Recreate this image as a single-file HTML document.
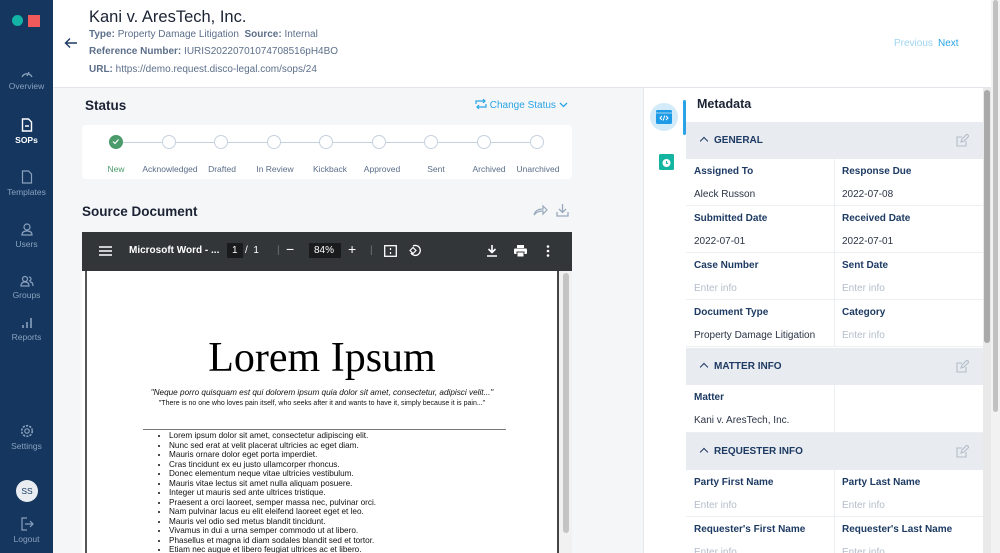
<!DOCTYPE html>
<html><head><meta charset="utf-8"><style>
*{box-sizing:border-box;margin:0;padding:0}
html,body{width:1000px;height:553px;overflow:hidden}
body{font-family:"Liberation Sans",Arial,sans-serif;background:#f5f6f8;position:relative;color:#1a2233}
.abs{position:absolute}
.side{left:0;top:0;width:53px;height:553px;background:#15375f}
.nav{position:absolute;left:0;width:53px;text-align:center;color:#8aa0bd;font-size:8.5px}
.nav svg{display:block;margin:0 auto 3px}
.hdr{left:53px;top:0;width:940px;height:88px;background:#fff;border-bottom:1px solid #e3e6ea}
.meta{color:#5c6f8a;font-size:10px}
.steps{left:82px;top:125px;width:490px;height:54px;background:#fff;border-radius:4px}
.step{position:absolute;top:10px;width:14px;height:14px;border-radius:50%;border:1.5px solid #c6d1de;background:#fff}
.line{position:absolute;top:17px;height:1px;background:#c6d1de}
.lbl{position:absolute;top:39px;font-size:8.5px;color:#5a6d88;transform:translateX(-50%);white-space:nowrap}
.pdf{left:82px;top:232px;width:490px;height:321px;background:#fff}
.tb{height:39px;background:#323639;color:#fff;font-size:10px;position:relative}
.tb span{position:absolute;top:13px}
.page{position:absolute;left:3px;top:39px;width:472px;height:282px;background:#fff;border-left:2px solid #555}
.panel{left:686px;top:88px;width:297px;height:465px;background:#fff}
.sec{position:absolute;left:0;width:297px;height:37px;background:#e8ebef;font-size:10px;font-weight:bold;color:#1d3a63}
.sec .t{position:absolute;left:28px;top:13px}
.sec .c{position:absolute;left:15px;top:16px;width:6px;height:6px;border-left:1.6px solid #1d3a63;border-top:1.6px solid #1d3a63;transform:rotate(45deg)}
.sec .e{position:absolute;right:14px;top:12px}
.row{position:absolute;left:0;width:297px;height:47px;border-bottom:1px solid #edf0f3}
.row .v{position:absolute;left:148px;top:0;width:1px;height:47px;background:#edf0f3}
.k{position:absolute;font-size:10px;font-weight:bold;color:#1d3a63;top:7px}
.val{position:absolute;font-size:10px;color:#2a3446;top:30px}
.ph{color:#b3bdc9}
</style></head><body>
<div class="abs side">
 <div class="abs" style="left:12px;top:15px;width:11px;height:11px;border-radius:50%;background:#13b3a5"></div>
 <div class="abs" style="left:28px;top:15px;width:12px;height:12px;background:#f05a5a"></div>
 <div class="nav" style="top:68px"><svg width="14" height="10" viewBox="0 0 14 10"><path d="M2 9A5.5 5.5 0 0 1 12 9M7 8L9 4" stroke="#8aa0bd" stroke-width="1.3" fill="none"/></svg>Overview</div>
 <div class="nav" style="top:118px;color:#fff;font-weight:bold"><svg width="12" height="14" viewBox="0 0 12 14"><path d="M1.5 1h6l3 3v9h-9z M4 8h4" stroke="#fff" stroke-width="1.4" fill="none"/></svg>SOPs</div>
 <div class="nav" style="top:170px"><svg width="12" height="14" viewBox="0 0 12 14"><path d="M1.5 1h6l3 3v9h-9z" stroke="#8aa0bd" stroke-width="1.2" fill="none"/></svg>Templates</div>
 <div class="nav" style="top:222px"><svg width="14" height="14" viewBox="0 0 14 14"><circle cx="7" cy="5" r="3" stroke="#8aa0bd" stroke-width="1.2" fill="none"/><path d="M2 13c0-3 2-4 5-4s5 1 5 4z" stroke="#8aa0bd" stroke-width="1.2" fill="none"/></svg>Users</div>
 <div class="nav" style="top:275px"><svg width="14" height="12" viewBox="0 0 14 12"><circle cx="5" cy="4" r="2.5" stroke="#8aa0bd" stroke-width="1.2" fill="none"/><path d="M1 11c0-3 2-4 4-4s4 1 4 4zM9 2a2 2 0 0 1 0 4M10 7c2 0 3 1 3 4" stroke="#8aa0bd" stroke-width="1.2" fill="none"/></svg>Groups</div>
 <div class="nav" style="top:317px"><svg width="12" height="12" viewBox="0 0 12 12"><path d="M2 11V8M6 11V5M10 11V1" stroke="#8aa0bd" stroke-width="1.6"/></svg>Reports</div>
 <div class="nav" style="top:424px"><svg width="14" height="14" viewBox="0 0 14 14"><circle cx="7" cy="7" r="2.2" stroke="#8aa0bd" stroke-width="1.2" fill="none"/><circle cx="7" cy="7" r="5.3" stroke="#8aa0bd" stroke-width="1.6" stroke-dasharray="2.2 1.2" fill="none"/></svg>Settings</div>
 <div class="abs" style="left:16px;top:480px;width:22px;height:22px;border-radius:50%;background:#e9edf2;color:#15375f;font-size:8.5px;text-align:center;line-height:22px">SS</div>
 <div class="nav" style="top:517px"><svg width="14" height="14" viewBox="0 0 14 14"><path d="M7 1H2v12h5M5 7h8M10 4l3 3-3 3" stroke="#8aa0bd" stroke-width="1.2" fill="none"/></svg>Logout</div>
</div>

<div class="abs hdr">
 <svg class="abs" style="left:11px;top:37px" width="14" height="12" viewBox="0 0 14 12"><path d="M13 6H2M6 1.5L1.5 6 6 10.5" stroke="#1d3a63" stroke-width="1.4" fill="none"/></svg>
 <div class="abs" style="left:36px;top:8px;font-size:16.5px;color:#1a2233">Kani v. AresTech, Inc.</div>
 <div class="abs meta" style="left:36px;top:29px"><b>Type:</b> Property Damage Litigation &nbsp;<b>Source:</b> Internal</div>
 <div class="abs meta" style="left:36px;top:46px"><b>Reference Number:</b> IURIS20220701074708516pH4BO</div>
 <div class="abs meta" style="left:36px;top:64px"><b>URL:</b> https://demo.request.disco-legal.com/sops/24</div>
 <div class="abs" style="left:841px;top:38px;font-size:10px;color:#9fd4f2">Previous</div>
 <div class="abs" style="left:885px;top:38px;font-size:10px;color:#2aa4e6">Next</div>
</div>

<div class="abs" style="left:85px;top:98px;font-size:13.5px;font-weight:bold">Status</div>
<div class="abs" style="left:475px;top:99px;font-size:10px;color:#2aa4e6"><svg width="12" height="10" viewBox="0 0 12 10" style="vertical-align:-1px"><path d="M1 5V2h9M8 0l2 2-2 2M11 5v3H2M4 10 2 8l2-2" stroke="#2aa4e6" stroke-width="1.2" fill="none"/></svg> Change Status <svg width="9" height="6" viewBox="0 0 9 6"><path d="M1 1l3.5 3.5L8 1" stroke="#2aa4e6" stroke-width="1.3" fill="none"/></svg></div>
<div class="abs steps">
 <div class="line" style="left:40px;width:415px"></div>
 <div class="step" style="left:27px;background:#4b9b6b;border-color:#4b9b6b"><svg width="11" height="11" viewBox="0 0 11 11" style="position:absolute;left:0;top:0"><path d="M3 5.5l2 2 3.5-4" stroke="#fff" stroke-width="1.2" fill="none"/></svg></div>
 <div class="step" style="left:80px"></div><div class="step" style="left:132px"></div><div class="step" style="left:185px"></div><div class="step" style="left:237px"></div><div class="step" style="left:290px"></div><div class="step" style="left:342px"></div><div class="step" style="left:395px"></div><div class="step" style="left:448px"></div>
 <div class="lbl" style="left:34px;color:#4b9b6b">New</div><div class="lbl" style="left:88px">Acknowledged</div><div class="lbl" style="left:140px">Drafted</div><div class="lbl" style="left:193px">In Review</div><div class="lbl" style="left:248px">Kickback</div><div class="lbl" style="left:300px">Approved</div><div class="lbl" style="left:354px">Sent</div><div class="lbl" style="left:407px">Archived</div><div class="lbl" style="left:456px">Unarchived</div>
</div>

<div class="abs" style="left:82px;top:204px;font-size:13.5px;font-weight:bold">Source Document</div>
<svg class="abs" style="left:533px;top:204px" width="15" height="12" viewBox="0 0 15 12"><path d="M1 11c1-4 4-6 9-6V2l4 4-4 4V7c-4 0-7 1-9 4z" stroke="#9aaabd" stroke-width="1.2" fill="none"/></svg>
<svg class="abs" style="left:556px;top:203px" width="13" height="14" viewBox="0 0 13 14"><path d="M6.5 1v8M3 6l3.5 3.5L10 6M1 9v4h11V9" stroke="#9aaabd" stroke-width="1.3" fill="none"/></svg>

<div class="abs pdf">
 <div class="tb">
  <svg style="position:absolute;left:17px;top:14px" width="13" height="10" viewBox="0 0 13 10"><path d="M0 1h13M0 5h13M0 9h13" stroke="#fff" stroke-width="1.5"/></svg>
  <span style="left:47px;font-weight:bold">Microsoft Word - ...</span>
  <span style="left:145px;top:11px;background:#191b1c;padding:2px 5px">1</span><span style="left:163px">/ &nbsp;1</span>
  <span style="left:195px;color:#777">|</span>
  <span style="left:204px;font-size:14px;top:9px">−</span>
  <span style="left:227px;top:11px;background:#191b1c;padding:2px 6px 2px 5px;width:32px">84%</span>
  <span style="left:266px;font-size:14px;top:9px">+</span>
  <span style="left:288px;color:#777">|</span>
  <svg style="position:absolute;left:302px;top:13px" width="13" height="12" viewBox="0 0 13 12"><rect x="0.7" y="0.7" width="11.6" height="10.6" stroke="#fff" stroke-width="1.3" fill="none"/><path d="M6.5 3v2M6.5 7v2" stroke="#fff" stroke-width="1.2"/></svg>
  <svg style="position:absolute;left:327px;top:12px" width="13" height="13" viewBox="0 0 13 13"><path d="M4 2a5 5 0 1 1-2 7" stroke="#fff" stroke-width="1.3" fill="none"/><path d="M1 6.5l3-3 3 3-3 3z" stroke="#fff" stroke-width="1.2" fill="none"/></svg>
  <svg style="position:absolute;left:405px;top:13px" width="10" height="12" viewBox="0 0 10 12"><path d="M5 0v7M1.5 4l3.5 3.5L8.5 4M0 11h10" stroke="#fff" stroke-width="1.6" fill="none"/></svg>
  <svg style="position:absolute;left:432px;top:13px" width="13" height="12" viewBox="0 0 13 12"><rect x="3" y="0" width="7" height="3" fill="#fff"/><rect x="0" y="3.5" width="13" height="5.5" rx="1" fill="#fff"/><rect x="3" y="7" width="7" height="5" fill="#fff" stroke="#323639" stroke-width="1"/></svg>
  <svg style="position:absolute;left:464px;top:13px" width="4" height="12" viewBox="0 0 4 12"><circle cx="2" cy="1.5" r="1.3" fill="#fff"/><circle cx="2" cy="6" r="1.3" fill="#fff"/><circle cx="2" cy="10.5" r="1.3" fill="#fff"/></svg>
 </div>
 <div class="page">
  <div style="position:absolute;left:0;width:470px;top:63px;line-height:48px;text-align:center;font-family:'Liberation Serif',serif;font-size:42px;color:#000">Lorem Ipsum</div>
  <div style="position:absolute;left:0;width:470px;top:117px;text-align:center;font-size:8.2px;font-style:italic;color:#111">"Neque porro quisquam est qui dolorem ipsum quia dolor sit amet, consectetur, adipisci velit..."</div>
  <div style="position:absolute;left:0;width:470px;top:129px;text-align:center;font-size:7px;color:#111">"There is no one who loves pain itself, who seeks after it and wants to have it, simply because it is pain..."</div>
  <div style="position:absolute;left:56px;top:158px;width:363px;height:1px;background:#777"></div>
  <ul style="position:absolute;left:82px;top:160px;font-size:8.2px;line-height:9.5px;color:#111;list-style:disc">
   <li>Lorem ipsum dolor sit amet, consectetur adipiscing elit.</li><li>Nunc sed erat at velit placerat ultricies ac eget diam.</li><li>Mauris ornare dolor eget porta imperdiet.</li><li>Cras tincidunt ex eu justo ullamcorper rhoncus.</li><li>Donec elementum neque vitae ultricies vestibulum.</li><li>Mauris vitae lectus sit amet nulla aliquam posuere.</li><li>Integer ut mauris sed ante ultrices tristique.</li><li>Praesent a orci laoreet, semper massa nec, pulvinar orci.</li><li>Nam pulvinar lacus eu elit eleifend laoreet eget et leo.</li><li>Mauris vel odio sed metus blandit tincidunt.</li><li>Vivamus in dui a urna semper commodo ut at libero.</li><li>Phasellus et magna id diam sodales blandit sed et tortor.</li><li>Etiam nec augue et libero feugiat ultrices ac et libero.</li>
  </ul>
 </div>
 <div style="position:absolute;left:475px;top:39px;width:15px;height:282px;background:#f1f1f1;border-left:2px solid #444"></div>
 <div style="position:absolute;left:481px;top:41px;width:6px;height:260px;background:#c4c4c4;border-radius:3px"></div>
</div>

<div class="abs" style="left:643px;top:88px;width:43px;height:465px;background:#fff;border-left:1px solid #e3e6ea"></div>
<div class="abs" style="left:650px;top:103px;width:28px;height:28px;border-radius:50%;background:#d3ebf9"></div>
<svg class="abs" style="left:656px;top:110px" width="16" height="14" viewBox="0 0 16 14"><rect width="16" height="14" rx="1.5" fill="#1e9be6"/><path d="M6 6l-2 2 2 2M10 6l2 2-2 2M8.8 5.5l-1.6 5" stroke="#fff" stroke-width="1" fill="none"/><path d="M0 3h16" stroke="#fff" stroke-width=".6"/></svg>
<div class="abs" style="left:683px;top:100px;width:3px;height:35px;background:#2aa4e6;border-radius:2px"></div>
<svg class="abs" style="left:659px;top:154px" width="15" height="16" viewBox="0 0 15 16"><rect width="15" height="16" rx="1.5" fill="#14b5a0"/><circle cx="7.5" cy="9" r="4" fill="#fff"/><path d="M7.5 7v2.3h1.6" stroke="#14b5a0" stroke-width="1.1" fill="none"/></svg>

<div class="abs panel">
 <div class="abs" style="left:11px;top:9px;font-size:12.5px;font-weight:bold;color:#1a2233">Metadata</div>
 <div class="sec" style="top:34px"><div class="c"></div><div class="t">GENERAL</div><svg class="e" width="13" height="13" viewBox="0 0 13 13"><path d="M10 7v5H1V3h5M5 8l1-3 5-5 2 2-5 5z" stroke="#b3bdc9" stroke-width="1.1" fill="none"/></svg></div>
 <div class="row" style="top:71px"><div class="v"></div><div class="k" style="left:8px">Assigned To</div><div class="k" style="left:156px">Response Due</div><div class="val" style="left:8px">Aleck Russon</div><div class="val" style="left:156px">2022-07-08</div></div>
 <div class="row" style="top:118px"><div class="v"></div><div class="k" style="left:8px">Submitted Date</div><div class="k" style="left:156px">Received Date</div><div class="val" style="left:8px">2022-07-01</div><div class="val" style="left:156px">2022-07-01</div></div>
 <div class="row" style="top:165px"><div class="v"></div><div class="k" style="left:8px">Case Number</div><div class="k" style="left:156px">Sent Date</div><div class="val ph" style="left:8px">Enter info</div><div class="val ph" style="left:156px">Enter info</div></div>
 <div class="row" style="top:212px"><div class="v"></div><div class="k" style="left:8px">Document Type</div><div class="k" style="left:156px">Category</div><div class="val" style="left:8px">Property Damage Litigation</div><div class="val ph" style="left:156px">Enter info</div></div>
 <div class="sec" style="top:260px"><div class="c"></div><div class="t">MATTER INFO</div><svg class="e" width="13" height="13" viewBox="0 0 13 13"><path d="M10 7v5H1V3h5M5 8l1-3 5-5 2 2-5 5z" stroke="#b3bdc9" stroke-width="1.1" fill="none"/></svg></div>
 <div class="row" style="top:297px;height:48px"><div class="v"></div><div class="k" style="left:8px">Matter</div><div class="val" style="left:8px">Kani v. AresTech, Inc.</div></div>
 <div class="sec" style="top:345px"><div class="c"></div><div class="t">REQUESTER INFO</div><svg class="e" width="13" height="13" viewBox="0 0 13 13"><path d="M10 7v5H1V3h5M5 8l1-3 5-5 2 2-5 5z" stroke="#b3bdc9" stroke-width="1.1" fill="none"/></svg></div>
 <div class="row" style="top:382px"><div class="v"></div><div class="k" style="left:8px">Party First Name</div><div class="k" style="left:156px">Party Last Name</div><div class="val ph" style="left:8px">Enter info</div><div class="val ph" style="left:156px">Enter info</div></div>
 <div class="row" style="top:429px"><div class="v"></div><div class="k" style="left:8px">Requester's First Name</div><div class="k" style="left:156px">Requester's Last Name</div><div class="val ph" style="left:8px">Enter info</div><div class="val ph" style="left:156px">Enter info</div></div>
</div>
<div class="abs" style="left:983px;top:88px;width:8px;height:465px;background:#e9e9e9"></div>
<div class="abs" style="left:984px;top:90px;width:6px;height:253px;background:#a9a9a9;border-radius:3px"></div>
<div class="abs" style="left:991px;top:0;width:9px;height:553px;background:#f2f2f2"></div>
<div class="abs" style="left:993px;top:0;width:5px;height:412px;background:#c1c1c1;border-radius:3px"></div>
</body></html>
